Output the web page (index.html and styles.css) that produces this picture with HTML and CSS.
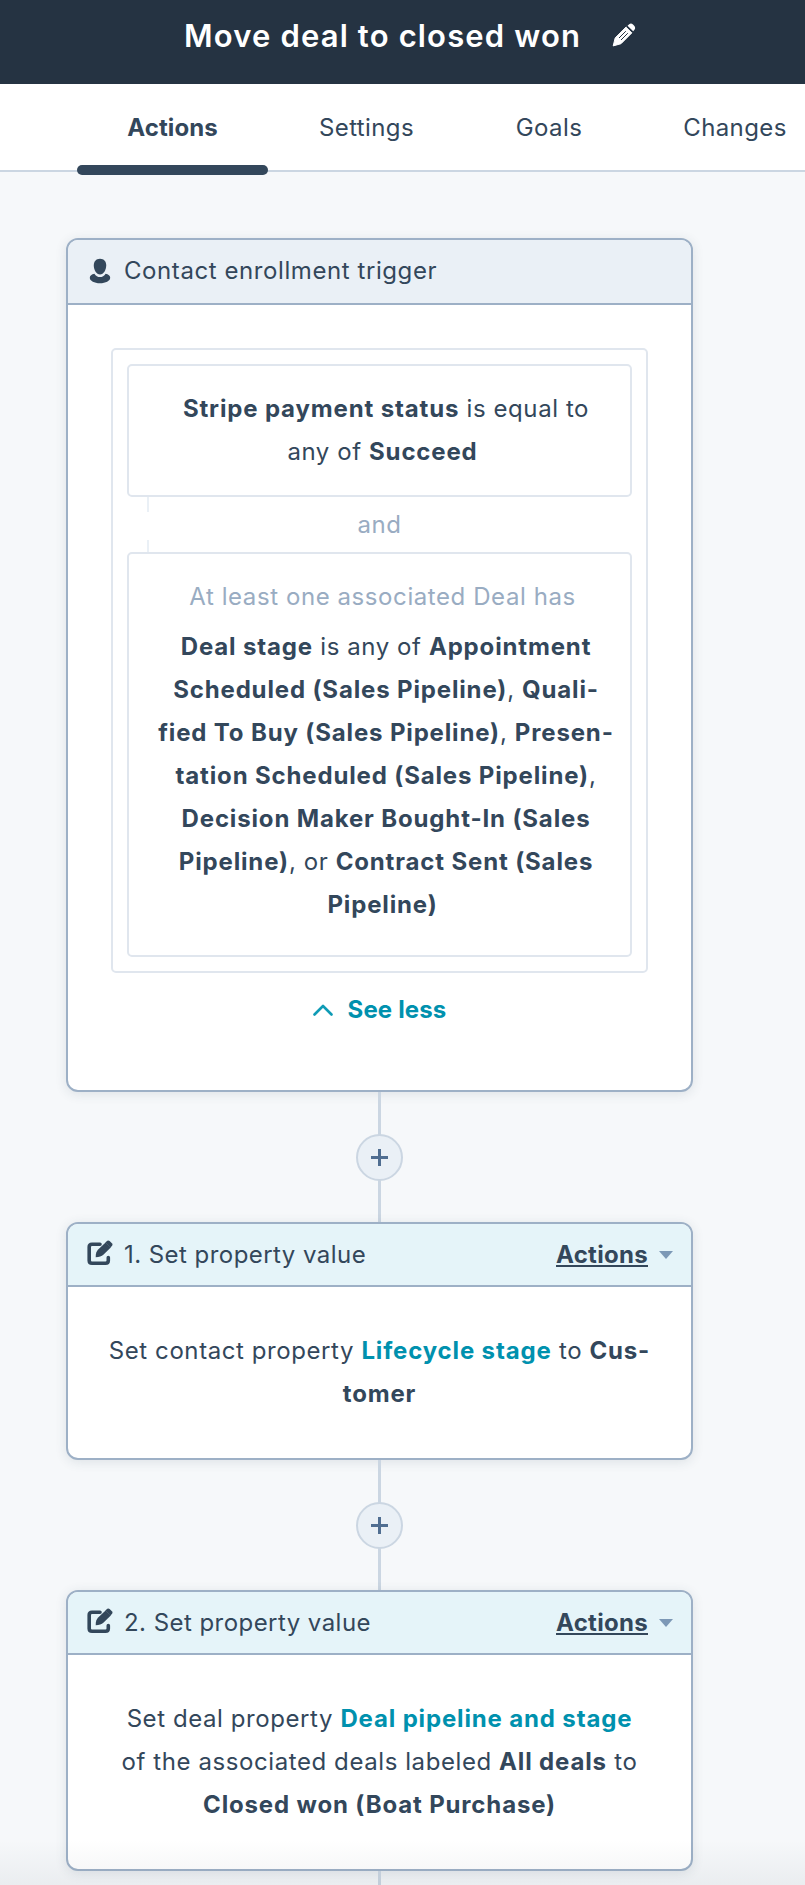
FILE: index.html
```html
<!DOCTYPE html>
<html lang="en">
<head>
    <meta charset="UTF-8">
    <meta name="viewport" content="width=device-width, initial-scale=1.0">
    <title>Move deal to closed won</title>
    <link rel="stylesheet" href="styles.css">
</head>
<body>
    <header class="topbar">
        <h1 class="title">Move deal to closed won</h1>
        <svg class="pencil" viewBox="0 0 24 24" width="24" height="24">
            <path d="M1.2 22.9 3.2 14.9 14.2 3.9 20 9.7 9 20.7Z" fill="#fff" stroke="#fff" stroke-width="1" stroke-linejoin="round"/>
            <path d="M15.5 2.7 17.2 1.3Q19-.2 21 1.5L22.4 3Q23.9 5 22.4 6.8L21.2 8.2Z" fill="#fff"/>
            <path d="M14.6 3.6 20.4 9.4" stroke="#253342" stroke-width="1"/>
            <path d="M7 15 13.800 8.200M9 17 15.800 10.200" stroke="#253342" stroke-width="1"/>
        </svg>
    </header>
    <nav class="tabs">
        <a class="tab active">Actions</a>
        <a class="tab settings">Settings</a>
        <a class="tab goals">Goals</a>
        <a class="tab changes">Changes</a>
    </nav>

    <main class="flow">
        <section class="card trigger">
            <div class="card-head">
                <svg class="head-icon" viewBox="0 0 24 26" width="24" height="26">
                    <path d="M12 .8C16 .8 18.2 3.6 18.2 7.5 18.2 12 15.6 16.4 12 16.4S5.8 12 5.8 7.5C5.8 3.6 8 .8 12 .8Z" fill="#33475b"/>
                    <path d="M6.4 15.7C7.8 18 9.8 19.1 12 19.1S16.2 18 17.6 15.7C20.4 16.3 22.2 17.7 22.2 19.7 22.2 22.8 17.6 25.2 12 25.2S1.8 22.8 1.8 19.7C1.8 17.7 3.6 16.3 6.4 15.7Z" fill="#33475b"/>
                </svg>
                <span class="head-text">Contact enrollment trigger</span>
            </div>
            <div class="filters">
                <div class="filter">
                    <span class="line shift"><b>Stripe payment status</b> is equal to</span>
                    <span class="line">any of <b>Succeed</b></span>
                </div>
                <div class="and">and</div>
                <div class="filter deal">
                    <span class="line muted">At least one associated Deal has</span>
                    <span class="line shift"><b>Deal stage</b> is any of <b>Appointment</b></span>
                    <span class="line shift"><b>Scheduled (Sales Pipeline)</b>, <b>Quali-</b></span>
                    <span class="line shift"><b>fied To Buy (Sales Pipeline)</b>, <b>Presen-</b></span>
                    <span class="line shift"><b>tation Scheduled (Sales Pipeline)</b>,</span>
                    <span class="line shift"><b>Decision Maker Bought-In (Sales</b></span>
                    <span class="line shift"><b>Pipeline)</b>, or <b>Contract Sent (Sales</b></span>
                    <span class="line"><b>Pipeline)</b></span>
                </div>
            </div>
            <a class="see-less">
                <svg viewBox="0 0 20 12" width="20" height="12">
                    <path d="M1.5 10.5 10 2 18.5 10.5" fill="none" stroke="#0f9bb5" stroke-width="2.6" stroke-linecap="round" stroke-linejoin="round"/>
                </svg>
                <b>See less</b>
            </a>
        </section>

        <div class="connector"><button class="plus"></button></div>

        <section class="card action first">
            <div class="card-head">
                <svg class="head-icon" viewBox="0 0 26 26" width="26" height="26">
                    <path d="M13 4.200H5Q2.200 4.200 2.200 7V20.500Q2.200 23.200 5 23.200H18.500Q21.300 23.200 21.300 20.500V17.500" fill="none" stroke="#33475b" stroke-width="3.600" stroke-linecap="round"/>
                    <path d="M8.700 17.300C8.600 13 9.600 11 11.400 9.200L18.600 2.400 23.800 7.500 16.600 14.400C14.500 16.300 12.300 17 8.700 17.300Z" fill="#33475b"/>
                    <path d="M18.400 2.600 20.300.8Q21.500 0 22.600 1L25.100 3.500Q26 4.600 25.100 5.700L23.400 7.600Z" fill="#33475b"/>
                </svg>
                <span class="head-text">1. Set property value</span>
                <a class="menu">Actions</a>
                <i class="caret"></i>
            </div>
            <div class="card-body">
                <span class="line">Set contact property <b class="link">Lifecycle stage</b> to <b>Cus-</b></span>
                <span class="line"><b>tomer</b></span>
            </div>
        </section>

        <div class="connector"><button class="plus"></button></div>

        <section class="card action second">
            <div class="card-head">
                <svg class="head-icon" viewBox="0 0 26 26" width="26" height="26">
                    <path d="M13 4.200H5Q2.200 4.200 2.200 7V20.500Q2.200 23.200 5 23.200H18.500Q21.300 23.200 21.300 20.500V17.500" fill="none" stroke="#33475b" stroke-width="3.600" stroke-linecap="round"/>
                    <path d="M8.700 17.300C8.600 13 9.600 11 11.400 9.200L18.600 2.400 23.800 7.500 16.600 14.400C14.500 16.300 12.300 17 8.700 17.300Z" fill="#33475b"/>
                    <path d="M18.400 2.600 20.300.8Q21.500 0 22.600 1L25.100 3.500Q26 4.600 25.100 5.700L23.400 7.600Z" fill="#33475b"/>
                </svg>
                <span class="head-text">2. Set property value</span>
                <a class="menu">Actions</a>
                <i class="caret"></i>
            </div>
            <div class="card-body">
                <span class="line">Set deal property <b class="link">Deal pipeline and stage</b></span>
                <span class="line">of the associated deals labeled <b>All deals</b> to</span>
                <span class="line"><b>Closed won (Boat Purchase)</b></span>
            </div>
        </section>

        <div class="connector last"></div>
    </main>
    <div class="fade"></div>
</body>
</html>
```
FILE: styles.css
```css
* {
    box-sizing: border-box;
}
body {
    margin: 0;
    height: 1885px;
    overflow: hidden;
    position: relative;
    background: #f6f8fa;
    color: #33475b;
    font-family: Inter, "Open Sans", sans-serif;
    font-size: 24px;
    line-height: 43px;
    letter-spacing: 0.58px;
}
b {
    font-weight: 700;
    letter-spacing: 0.85px;
}

/* header */
.topbar {
    height: 84px;
    background: #253342;
    display: flex;
    align-items: flex-start;
    padding: 14px 0 0 184px;
}
.title {
    margin: 0;
    width: 398px;
    color: #fff;
    font-size: 31px;
    font-weight: 600;
    line-height: 43px;
    letter-spacing: 1.15px;
    white-space: nowrap;
}
.pencil {
    margin: 9px 0 0 30px;
}
.tabs {
    height: 88px;
    padding-left: 77px;
    display: flex;
    background: #fff;
    border-bottom: 2px solid #cbd6e2;
    letter-spacing: 0.4px;
}
.tab {
    flex: none;
    width: 197px;
    height: 91px;
    padding-top: 22px;
    text-align: center;
}
.tab.active {
    width: 191px;
    font-weight: 700;
    letter-spacing: 0.1px;
}
.tab.active::after {
    content: "";
    display: block;
    height: 10px;
    margin-top: 16px;
    background: #33475b;
    border-radius: 5px;
}
.tab.goals {
    width: 168px;
}
.tab.changes {
    width: 204px;
}

/* workflow */
.flow {
    width: 627px;
    margin: 66px 0 0 66px;
}
.card {
    background: #fff;
    border: 2px solid #9db0c6;
    border-radius: 12px;
    box-shadow: 0 2px 12px rgba(45, 62, 80, 0.12);
    overflow: hidden;
}
.trigger {
    height: 854px;
}
.first {
    height: 238px;
}
.second {
    height: 281px;
}
.card-head {
    height: 63px;
    display: flex;
    align-items: center;
    padding: 0 18px 0 19px;
    background: #e5f4f9;
    border-bottom: 2px solid #9db0c6;
}
.trigger .card-head {
    height: 65px;
    padding-bottom: 2px;
    background: #eaf0f6;
}
.head-icon {
    flex: none;
    width: 26px;
    margin-right: 11px;
}
.action .head-icon {
    margin-bottom: 3px;
}
.head-text {
    white-space: nowrap;
}
.action .head-text {
    letter-spacing: 0.45px;
}
.menu {
    margin-left: auto;
    font-weight: 700;
    letter-spacing: 0.3px;
    text-decoration: underline;
    text-decoration-thickness: 2px;
    text-underline-offset: 2px;
    text-decoration-skip-ink: none;
}
.caret {
    margin-left: 11px;
    border: 7px solid transparent;
    border-top: 8px solid #7c98b6;
    border-bottom: 0;
}
.filters {
    margin: 43px 43px 0;
    padding: 14px;
    border: 2px solid #e0e6ee;
    border-radius: 5px;
}
.filter {
    height: 133px;
    padding: 21px 0 0 6px;
    border: 2px solid #e0e6ee;
    border-radius: 5px;
}
.filter.deal {
    height: 405px;
}
.line {
    display: block;
    text-align: center;
    white-space: nowrap;
}
.shift {
    padding-left: 7px;
}
.muted {
    color: #99acc2;
    margin-bottom: 7px;
}
.and {
    height: 55px;
    line-height: 55px;
    text-align: center;
    color: #99acc2;
    background: linear-gradient(#eaf0f6 15px, transparent 15px 43px, #eaf0f6 43px) 20px 0 / 2px 100% no-repeat;
}
.see-less {
    display: flex;
    justify-content: center;
    align-items: center;
    gap: 15px;
    margin-top: 15px;
    color: #0091ae;
}
.see-less b {
    letter-spacing: 0.15px;
}
.card-body {
    padding-top: 42px;
}
.link {
    color: #0091ae;
}
.connector {
    height: 130px;
    display: flex;
    align-items: center;
    justify-content: center;
    background: linear-gradient(#cbd6e2, #cbd6e2) center / 3px 100% no-repeat;
}
.connector.last {
    height: 20px;
}
.plus {
    width: 47px;
    height: 47px;
    padding: 0;
    border: 2px solid #cbd6e2;
    border-radius: 50%;
    background:
        linear-gradient(#506e91, #506e91) center / 17px 3px no-repeat,
        linear-gradient(#506e91, #506e91) center / 3px 17px no-repeat,
        #eaf0f6;
}

/* bottom shade over the canvas */
.fade {
    position: absolute;
    left: 0;
    right: 0;
    bottom: 0;
    height: 45px;
    background: linear-gradient(rgba(45, 62, 80, 0), rgba(45, 62, 80, 0.06));
}
```
